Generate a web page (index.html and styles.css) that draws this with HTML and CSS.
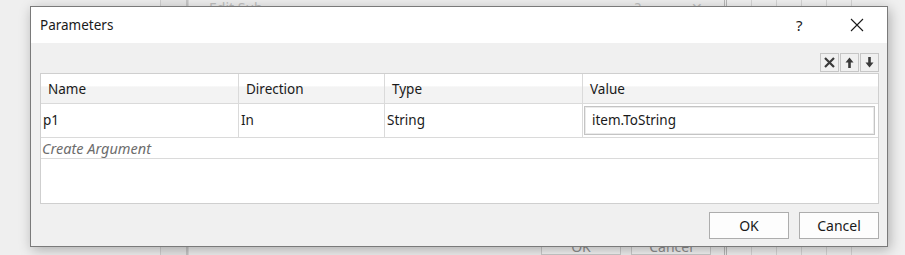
FILE: index.html
```html
<!DOCTYPE html>
<html lang="en">
<head>
    <meta charset="UTF-8">
    <meta name="viewport" content="width=device-width, initial-scale=1.0">
    <title>Parameters</title>
    <link rel="stylesheet" href="styles.css">
</head>
<body>
    <div class="desktop">
        <div class="pane-left"></div>
        <div class="pane-gap"></div>
        <div class="back-window">
            <div class="back-title">
                <span class="back-name">Edit Sub</span>
                <span class="back-help">?</span>
                <span class="back-close">&#x2715;</span>
            </div>
            <div class="back-buttons">
                <span class="back-btn">OK</span>
                <span class="back-btn">Cancel</span>
            </div>
        </div>
        <div class="pane-right">
            <div class="col"></div>
            <div class="col"></div>
            <div class="col"></div>
            <div class="col"></div>
            <div class="col"></div>
        </div>
    </div>

    <div class="dialog">
        <div class="titlebar">
            <span class="title">Parameters</span>
            <span class="help">?</span>
            <svg class="close" width="14" height="14" viewBox="0 0 14 14">
                <path d="M1 1 L13 13 M13 1 L1 13" stroke="#1a1a1a" stroke-width="1.1" fill="none"/>
            </svg>
        </div>
        <div class="content">
            <div class="toolbar">
                <button class="tool" title="Delete">
                    <svg width="13" height="13" viewBox="0 0 13 13">
                        <path d="M2 2 L11 11 M11 2 L2 11" stroke="#3a3a3a" stroke-width="2.2" fill="none"/>
                    </svg>
                </button>
                <button class="tool" title="Move up">
                    <svg width="11" height="13" viewBox="0 0 11 13">
                        <path d="M5.5 1.5 L1.5 6.5 H4.2 V12 H6.8 V6.5 H9.5 Z" fill="#3a3a3a"/>
                    </svg>
                </button>
                <button class="tool" title="Move down">
                    <svg width="11" height="13" viewBox="0 0 11 13">
                        <path d="M5.5 11.5 L1.5 6.5 H4.2 V1 H6.8 V6.5 H9.5 Z" fill="#3a3a3a"/>
                    </svg>
                </button>
            </div>

            <div class="grid">
                <div class="grid-head">
                    <div class="cell c-name">Name</div>
                    <div class="cell c-dir">Direction</div>
                    <div class="cell c-type">Type</div>
                    <div class="cell c-value">Value</div>
                </div>
                <div class="grid-row">
                    <div class="cell c-name">p1</div>
                    <div class="cell c-dir">In</div>
                    <div class="cell c-type">String</div>
                    <div class="cell c-value">
                        <div class="editbox">item.ToString</div>
                    </div>
                </div>
                <div class="grid-new">Create Argument</div>
            </div>

            <div class="actions">
                <button class="btn">OK</button>
                <button class="btn">Cancel</button>
            </div>
        </div>
    </div>
</body>
</html>
```

FILE: styles.css
```css
body {
    margin: 0;
    width: 905px;
    height: 255px;
    overflow: hidden;
    background-color: #ececec;
    font-family: "Noto Sans", "Open Sans", sans-serif;
    color: #1a1a1a;
    position: relative;
}

/* faded window behind the dialog */
.desktop {
    display: flex;
    height: 255px;
    opacity: 0.55;
}
.pane-left {
    width: 160px;
    background-color: #f2f2f2;
    border-right: 1px solid #b8b8b8;
}
.pane-gap {
    width: 25px;
    border-right: 2px solid #a8a8a8;
    background-color: #e4e4e4;
}
.back-window {
    width: 535px;
    display: flex;
    flex-direction: column;
    justify-content: space-between;
    background-color: #f0f0f0;
    border-right: 3px double #8a8a8a;
    border-left: 1px solid #c8c8c8;
}
.back-title {
    display: flex;
    align-items: flex-end;
    height: 9px;
    font-size: 14px;
    color: #9a9a9a;
    overflow: hidden;
}
.back-name {
    margin-left: 20px;
    line-height: 14px;
    position: relative;
    top: 6px;
}
.back-help {
    margin-left: 372px;
    line-height: 14px;
    position: relative;
    top: 6px;
}
.back-close {
    margin-left: 50px;
    line-height: 14px;
    position: relative;
    top: 6px;
}
.back-buttons {
    display: flex;
    gap: 10px;
    margin-left: 352px;
    height: 9px;
    overflow: hidden;
}
.back-btn {
    width: 78px;
    border: 1px solid #b0b0b0;
    background-color: #fafafa;
    font-size: 14px;
    color: #444;
    text-align: center;
    line-height: 0;
}
.pane-right {
    flex: 1;
    display: flex;
    background-color: #f4f4f4;
}
.col {
    width: 24px;
    border-right: 1px solid #c4c4c4;
}

/* dialog */
.dialog {
    position: absolute;
    left: 30px;
    top: 6px;
    width: 856px;
    height: 239px;
    border: 1px solid #7a7a7a;
    background-color: #f0f0f0;
    box-shadow: 2px 3px 12px rgba(0, 0, 0, 0.28);
    display: flex;
    flex-direction: column;
}
.titlebar {
    height: 36px;
    background-color: #ffffff;
    display: flex;
    align-items: center;
    padding-left: 9px;
}
.title {
    font-size: 13.5px;
    flex: 1;
}
.help {
    font-size: 15px;
    width: 54px;
}
.close {
    margin-right: 23px;
}

.content {
    flex: 1;
    padding: 10px 8px 6px 9px;
    display: flex;
    flex-direction: column;
}
.toolbar {
    display: flex;
    justify-content: flex-end;
    gap: 1px;
    height: 19px;
    margin-bottom: 1px;
}
.tool {
    width: 19px;
    height: 19px;
    padding: 0;
    border: 1px solid #c6c6c6;
    background-color: #f0f0f0;
    display: flex;
    align-items: center;
    justify-content: center;
}

.grid {
    height: 129px;
    border: 1px solid #cfcfcf;
    background-color: #ffffff;
    font-size: 13.5px;
}
.grid-head,
.grid-row {
    display: flex;
}
.grid-head {
    height: 29px;
    border-bottom: 1px solid #dadada;
    background: linear-gradient(#ffffff 40%, #f3f3f3 45%, #f3f3f3);
}
.grid-head .cell {
    padding-left: 7px;
    line-height: 30px;
}
.grid-row {
    height: 33px;
    border-bottom: 1px solid #dadada;
}
.grid-row .cell {
    padding-left: 2px;
    line-height: 33px;
}
.cell {
    border-right: 1px solid #dadada;
    box-sizing: border-box;
}
.c-name { width: 198px; }
.c-dir { width: 146px; }
.c-type { width: 198px; }
.c-value {
    flex: 1;
    border-right: none;
}
.grid-row .c-value {
    padding: 2px 3px 2px 1px;
}
.editbox {
    height: 27px;
    border: 1px solid #c4c4c4;
    box-shadow: inset 0 0 0 1px #ebebeb;
    line-height: 27px;
    padding-left: 7px;
}
.grid-new {
    height: 20px;
    line-height: 20px;
    padding-left: 1px;
    font-size: 14.5px;
    font-style: italic;
    color: #6d6d6d;
    border-bottom: 1px solid #dadada;
}

.actions {
    display: flex;
    justify-content: flex-end;
    gap: 10px;
    margin-top: 8px;
}
.btn {
    width: 80px;
    height: 27px;
    border: 1px solid #adadad;
    background-color: #fdfdfd;
    font-family: "Noto Sans", "Open Sans", sans-serif;
    font-size: 14px;
    color: #1a1a1a;
    padding: 0;
}
```
